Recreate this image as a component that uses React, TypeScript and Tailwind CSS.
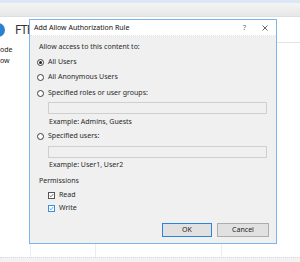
import React from "react";

function Radio({ checked, label }: { checked?: boolean; label: string }) {
  return (
    <div className="flex h-[8px] items-center gap-[4px] pl-[7px]">
      <span className="flex h-[7px] w-[7px] items-center justify-center rounded-full border border-[#3c3c3c] bg-white">
        {checked ? <span className="h-[3px] w-[3px] rounded-full bg-[#222]" /> : null}
      </span>
      <span>{label}</span>
    </div>
  );
}

function Check({ label, focused }: { label: string; focused?: boolean }) {
  return (
    <div className="flex h-[8px] items-center gap-[4px] pl-[18px]">
      <span className={`flex h-[7px] w-[7px] items-center justify-center border bg-white ${focused ? "border-[#3a8ee6]" : "border-[#555]"}`}>
        <svg viewBox="0 0 7 7" className="h-[5px] w-[5px]">
          <path d="M1 3.6 L2.8 5.3 L6 1.4" fill="none" stroke={focused ? "#2b7fd6" : "#444"} strokeWidth="1" />
        </svg>
      </span>
      <span>{label}</span>
    </div>
  );
}

export default function App() {
  return (
    <div className="relative flex h-[262px] w-[300px] flex-col overflow-hidden bg-white font-['Noto_Sans',sans-serif] text-[7px] leading-[8px] text-[#2a2a2a]">
      <div className="h-[3px] bg-[#dbe7f4]" />
      <div className="h-[14px] border-b border-[#dedede] bg-gradient-to-b from-[#f4f4f4] to-[#e7e7e7]" />
      <div className="flex h-[25px] items-center">
        <svg viewBox="0 0 10 16" className="h-[16px] w-[10px] -ml-[5px]">
          <circle cx="3" cy="8" r="7" fill="#2f7fd0" />
          <path d="M-2 4 Q2 3 4 6 Q6 9 3 12 Q1 13 0 10 Z" fill="#4caf50" />
        </svg>
        <span className="ml-[10px] text-[12px] leading-none tracking-[-0.6px] text-[#333]">FTP</span>
      </div>
      <div className="flex h-px">
        <div className="flex-1" />
        <div className="w-[23px] bg-[#e4e4e4]" />
      </div>
      <div className="mt-[3px] flex flex-col gap-[3px] text-[#222]">
        <div>ode</div>
        <div>ow</div>
      </div>
      <div className="flex-1" />
      <div className="flex h-[14px]">
        <div className="ml-[30px] w-[65px] border-l border-[#e6eef6]" />
        <div className="w-[126px] border-l border-[#e6eef6]" />
        <div className="flex-1 border-l border-[#e6eef6]" />
      </div>
      <div className="h-[5px] border-t border-dotted border-[#d8d8d8] bg-[#f2f2f2]" />

      <div className="absolute left-[29px] top-[19px] flex h-[225px] w-[248px] flex-col border border-[#7db4ea] bg-[#f0f0f0]">
        <div className="flex h-[16px] items-center border-b border-dotted border-[#e2e2e2] bg-white pl-[4px] pr-[8px]">
          <span className="flex-1 text-[#111]">Add Allow Authorization Rule</span>
          <span className="mr-[16px] text-[7px] text-[#666]">?</span>
          <svg viewBox="0 0 6 6" className="h-[6px] w-[6px]">
            <path d="M0.5 0.5 L5.5 5.5 M5.5 0.5 L0.5 5.5" stroke="#555" strokeWidth="0.9" />
          </svg>
        </div>
        <div className="flex flex-1 flex-col">
          <div className="mt-[7px] pl-[9px]">Allow access to this content to:</div>
          <div className="mt-[7px]"><Radio checked label="All Users" /></div>
          <div className="mt-[7px]"><Radio label="All Anonymous Users" /></div>
          <div className="mt-[8px]"><Radio label="Specified roles or user groups:" /></div>
          <div className="ml-[18px] mr-[9px] mt-[5px] h-[12px] border border-[#cfcfcf] bg-[#f0f0f0]" />
          <div className="mt-[4px] pl-[19px]">Example: Admins, Guests</div>
          <div className="mt-[6px]"><Radio label="Specified users:" /></div>
          <div className="ml-[18px] mr-[9px] mt-[6px] h-[12px] border border-[#cfcfcf] bg-[#f0f0f0]" />
          <div className="mt-[3px] pl-[19px]">Example: User1, User2</div>
          <div className="mt-[8px] pl-[9px]">Permissions</div>
          <div className="mt-[6px]"><Check label="Read" /></div>
          <div className="mt-[5px]"><Check focused label="Write" /></div>
          <div className="mt-auto mb-[6px] flex justify-end gap-[5px] pr-[7px]">
            <button className="flex h-[14px] w-[50px] items-center justify-center border border-[#2b84dc] bg-[#e1e1e1] text-[#222]">OK</button>
            <button className="flex h-[14px] w-[52px] items-center justify-center border border-[#adadad] bg-[#e1e1e1] text-[#222]">Cancel</button>
          </div>
        </div>
      </div>
    </div>
  );
}
